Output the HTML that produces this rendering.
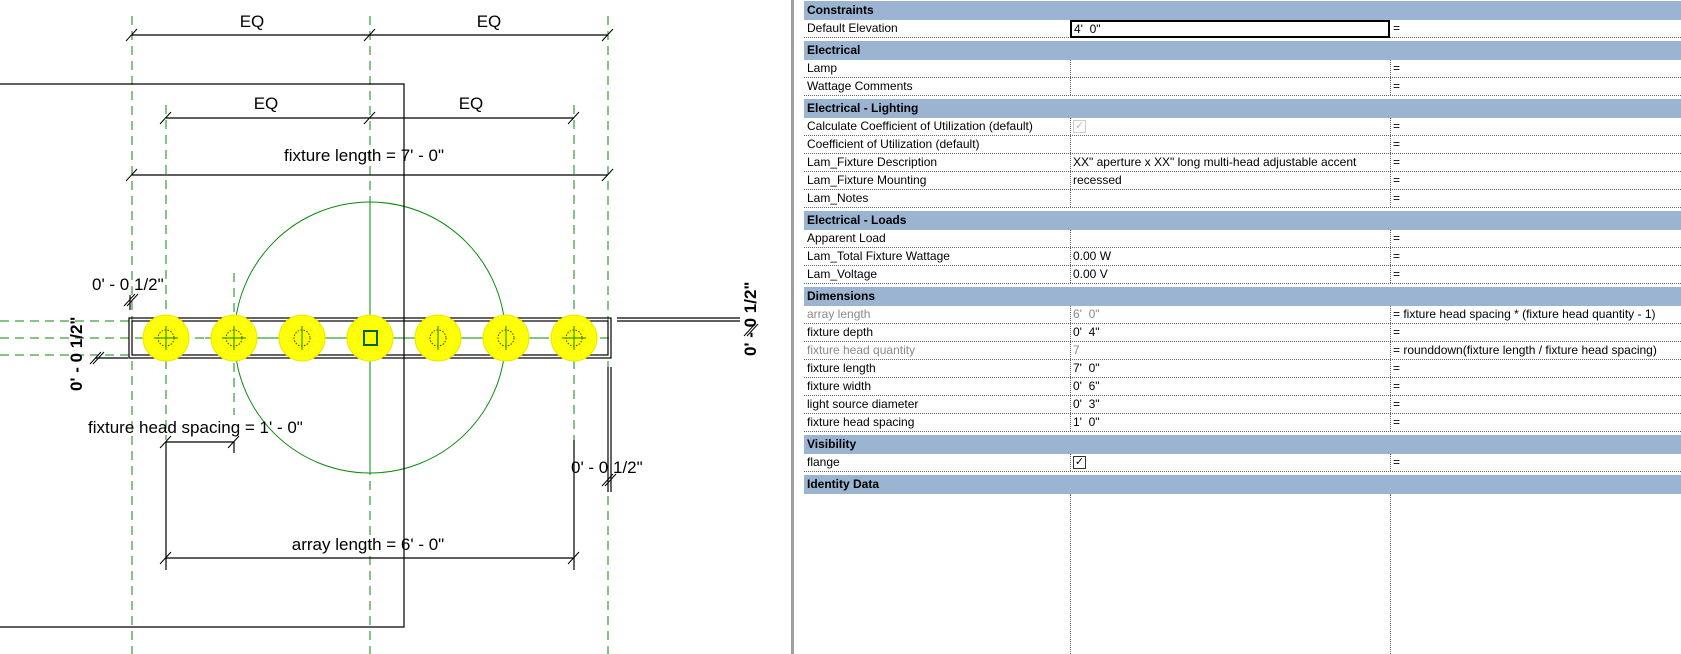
<!DOCTYPE html>
<html><head><meta charset="utf-8"><style>
*{margin:0;padding:0;box-sizing:border-box}
body{width:1681px;height:654px;background:#fff;position:relative;overflow:hidden;font-family:"Liberation Sans",sans-serif}
#pan{position:absolute;left:791px;top:0;width:3px;height:654px;background:#a0a0a0}
.r{position:absolute;left:804px;width:877px;font-size:12px;line-height:17px;color:#000}
.b{background:#9ab4d1;height:19px;font-weight:bold;padding-left:3px;line-height:19px}
.w{height:18px;border-bottom:1px dotted #666}
.w span{position:absolute;top:0}
.l{left:3px}.v{left:269px}.f{left:589px}
.vd{position:absolute;top:0;height:17px;border-left:1px dotted #666}
.g{color:#8a8a8a}
</style></head><body>
<svg width="790" height="654" style="position:absolute;left:0;top:0" font-family="Liberation Sans, sans-serif">
<g stroke="#0a8a0a" stroke-width="1" fill="none" stroke-dasharray="9,6">
<line x1="132" y1="16" x2="132" y2="654"/><line x1="370" y1="16" x2="370" y2="654"/><line x1="608" y1="16" x2="608" y2="654"/>
<line x1="166" y1="105" x2="166" y2="440"/><line x1="574" y1="105" x2="574" y2="440"/>
<line x1="234" y1="273" x2="234" y2="415"/>
<line x1="0" y1="321" x2="130" y2="321"/><line x1="0" y1="338" x2="611" y2="338"/><line x1="0" y1="355" x2="190" y2="355"/>
</g>
<g stroke="#0a8a0a" fill="none">
<circle cx="370" cy="337.5" r="135.5"/>
<line x1="370" y1="202" x2="370" y2="473"/>
<line x1="205" y1="338" x2="540" y2="338"/>
</g>
<g stroke="#000" stroke-width="1.2" fill="none">
<polyline points="0,84 404,84 404,627 0,627"/>
<line x1="132" y1="35" x2="608" y2="35"/>
<line x1="166" y1="118" x2="574" y2="118"/>
<line x1="132" y1="175" x2="608" y2="175"/>
<rect x="129" y="318" width="482" height="40"/>
<rect x="132" y="321" width="476" height="34"/>
<line x1="617" y1="318" x2="740" y2="318"/><line x1="617" y1="321" x2="740" y2="321"/>
<line x1="608" y1="367" x2="608" y2="492"/><line x1="611" y1="367" x2="611" y2="492"/>
<line x1="95" y1="358" x2="128" y2="358"/>
<line x1="130" y1="295" x2="130" y2="310"/>
<polyline points="166,570 166,442 234,442 234,453"/>
<line x1="574" y1="440" x2="574" y2="570"/>
<line x1="166" y1="558" x2="574" y2="558"/>
</g>
<g stroke="#000" stroke-width="1">
<path d="M126,41 l11,-12 M364,41 l11,-12 M602,41 l11,-12 M160,124 l11,-12 M364,124 l11,-12 M568,124 l11,-12 M126,181 l11,-12 M602,181 l11,-12 M160,564 l11,-12 M568,564 l11,-12 M160,448 l11,-12 M228,448 l11,-12 M124,306 l11,-12 M127,306 l11,-12 M90,364 l11,-12 M93,364 l11,-12 M602,486 l11,-12 M605,486 l11,-12 M744,336 l11,-12 M747,336 l11,-12"/>
</g>
<g fill="#ffff00" stroke="#e8e800">
<circle cx="166" cy="338" r="23"/><circle cx="234" cy="338" r="23"/><circle cx="302" cy="338" r="23"/><circle cx="370" cy="338" r="23"/><circle cx="438" cy="338" r="23"/><circle cx="506" cy="338" r="23"/><circle cx="574" cy="338" r="23"/>
</g>
<g fill="none" stroke="#fffdb0" stroke-width="0.6" stroke-dasharray="2,2">
<circle cx="166" cy="338" r="16"/><circle cx="234" cy="338" r="16"/><circle cx="302" cy="338" r="16"/><circle cx="370" cy="338" r="16"/><circle cx="438" cy="338" r="16"/><circle cx="506" cy="338" r="16"/><circle cx="574" cy="338" r="16"/>
</g>
<g fill="none" stroke="#333" stroke-width="1" stroke-dasharray="1.5,1.5">
<circle cx="166" cy="338" r="8"/><circle cx="234" cy="338" r="8"/><circle cx="302" cy="338" r="8"/><circle cx="438" cy="338" r="8"/><circle cx="506" cy="338" r="8"/><circle cx="574" cy="338" r="8"/>
</g>
<rect x="364" y="331" width="13" height="14" fill="#ffff00" stroke="#006400" stroke-width="2"/>
<g stroke="#0a8a0a"><path d="M166,326v24M154,338h24M234,326v24M222,338h24M302,326v24M438,326v24M506,326v24M574,326v24M562,338h24"/></g>
<g font-size="17" fill="#000">
<text x="252" y="27" text-anchor="middle">EQ</text>
<text x="489" y="27" text-anchor="middle">EQ</text>
<text x="266" y="109" text-anchor="middle">EQ</text>
<text x="471" y="109" text-anchor="middle">EQ</text>
<text x="364" y="161" text-anchor="middle">fixture length = 7' - 0"</text>
<text x="92" y="290">0' - 0 1/2"</text>
<text x="88" y="433">fixture head spacing = 1' - 0"</text>
<text x="368" y="550" text-anchor="middle">array length = 6' - 0"</text>
<text x="571" y="473">0' - 0 1/2"</text>
</g>
<g font-size="17" font-weight="bold" fill="#000">
<text transform="translate(82,391) rotate(-90)">0' - 0 1/2"</text>
<text transform="translate(756,356) rotate(-90)">0' - 0 1/2"</text>
</g>
</svg>
<div id="pan"></div>
<div class="r b" style="top:1px">Constraints</div>
<div class="r w" style="top:20px"><span class="l">Default Elevation</span><span class="f">=</span>
<div style="position:absolute;left:266px;top:0;width:320px;height:18px;border:2px solid #000;padding-left:2px;font-size:12px;line-height:14px">4'&nbsp; 0"</div></div>
<div class="r b" style="top:41px">Electrical</div>
<div class="r w" style="top:60px"><span class="l">Lamp</span><span class="f">=</span><i class="vd" style="left:266px"></i><i class="vd" style="left:586px"></i></div>
<div class="r w" style="top:78px"><span class="l">Wattage Comments</span><span class="f">=</span><i class="vd" style="left:266px"></i><i class="vd" style="left:586px"></i></div>
<div class="r b" style="top:99px">Electrical - Lighting</div>
<div class="r w" style="top:118px"><span class="l">Calculate Coefficient of Utilization (default)</span><span class="v" style="top:2px;width:13px;height:13px;border:1px solid #ccc;color:#bbb;font-size:11px;line-height:11px;text-align:center">✓</span><span class="f">=</span><i class="vd" style="left:266px"></i><i class="vd" style="left:586px"></i></div>
<div class="r w" style="top:136px"><span class="l">Coefficient of Utilization (default)</span><span class="f">=</span><i class="vd" style="left:266px"></i><i class="vd" style="left:586px"></i></div>
<div class="r w" style="top:154px"><span class="l">Lam_Fixture Description</span><span class="v">XX" aperture x XX" long multi-head adjustable accent</span><span class="f">=</span><i class="vd" style="left:266px"></i><i class="vd" style="left:586px"></i></div>
<div class="r w" style="top:172px"><span class="l">Lam_Fixture Mounting</span><span class="v">recessed</span><span class="f">=</span><i class="vd" style="left:266px"></i><i class="vd" style="left:586px"></i></div>
<div class="r w" style="top:190px"><span class="l">Lam_Notes</span><span class="f">=</span><i class="vd" style="left:266px"></i><i class="vd" style="left:586px"></i></div>
<div class="r b" style="top:211px">Electrical - Loads</div>
<div class="r w" style="top:230px"><span class="l">Apparent Load</span><span class="f">=</span><i class="vd" style="left:266px"></i><i class="vd" style="left:586px"></i></div>
<div class="r w" style="top:248px"><span class="l">Lam_Total Fixture Wattage</span><span class="v">0.00 W</span><span class="f">=</span><i class="vd" style="left:266px"></i><i class="vd" style="left:586px"></i></div>
<div class="r w" style="top:266px"><span class="l">Lam_Voltage</span><span class="v">0.00 V</span><span class="f">=</span><i class="vd" style="left:266px"></i><i class="vd" style="left:586px"></i></div>
<div class="r b" style="top:287px">Dimensions</div>
<div class="r w" style="top:306px"><span class="l g">array length</span><span class="v g">6'&nbsp; 0"</span><span class="f">= fixture head spacing * (fixture head quantity - 1)</span><i class="vd" style="left:266px"></i><i class="vd" style="left:586px"></i></div>
<div class="r w" style="top:324px"><span class="l">fixture depth</span><span class="v">0'&nbsp; 4"</span><span class="f">=</span><i class="vd" style="left:266px"></i><i class="vd" style="left:586px"></i></div>
<div class="r w" style="top:342px"><span class="l g">fixture head quantity</span><span class="v g">7</span><span class="f">= rounddown(fixture length / fixture head spacing)</span><i class="vd" style="left:266px"></i><i class="vd" style="left:586px"></i></div>
<div class="r w" style="top:360px"><span class="l">fixture length</span><span class="v">7'&nbsp; 0"</span><span class="f">=</span><i class="vd" style="left:266px"></i><i class="vd" style="left:586px"></i></div>
<div class="r w" style="top:378px"><span class="l">fixture width</span><span class="v">0'&nbsp; 6"</span><span class="f">=</span><i class="vd" style="left:266px"></i><i class="vd" style="left:586px"></i></div>
<div class="r w" style="top:396px"><span class="l">light source diameter</span><span class="v">0'&nbsp; 3"</span><span class="f">=</span><i class="vd" style="left:266px"></i><i class="vd" style="left:586px"></i></div>
<div class="r w" style="top:414px"><span class="l">fixture head spacing</span><span class="v">1'&nbsp; 0"</span><span class="f">=</span><i class="vd" style="left:266px"></i><i class="vd" style="left:586px"></i></div>
<div class="r b" style="top:435px">Visibility</div>
<div class="r w" style="top:454px"><span class="l">flange</span><span class="v" style="top:2px;width:13px;height:13px;border:1px solid #333;font-size:11px;line-height:11px;text-align:center">✓</span><span class="f">=</span><i class="vd" style="left:266px"></i><i class="vd" style="left:586px"></i></div>
<div class="r b" style="top:475px">Identity Data</div>
<div style="position:absolute;left:1070px;top:494px;height:160px;border-left:1px dotted #666"></div>
<div style="position:absolute;left:1390px;top:494px;height:160px;border-left:1px dotted #666"></div>
</body></html>
